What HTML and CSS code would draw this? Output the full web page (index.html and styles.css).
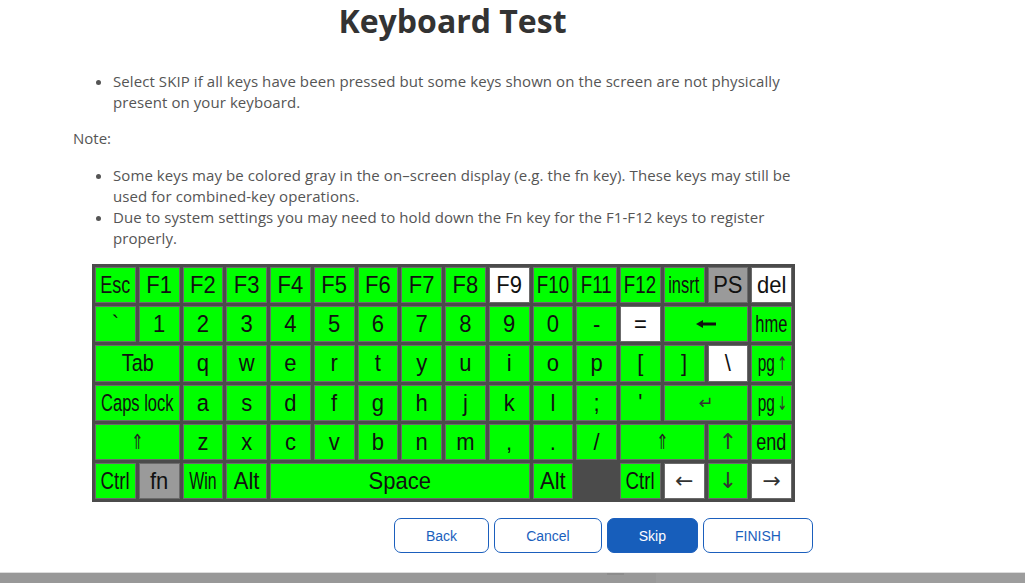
FILE: index.html
```html
<!DOCTYPE html>
<html>
<head>
<meta charset="utf-8">
<title>Keyboard Test</title>
<link rel="stylesheet" href="styles.css">
</head>
<body>
<div class="page">
  <header class="top">
    <h1 class="title">Keyboard Test</h1>
  </header>
  <div class="view">
    <div class="content">
      <ul class="list list-first">
        <li>Select SKIP if all keys have been pressed but some keys shown on the screen are not physically present on your keyboard.</li>
      </ul>
      <p class="note">Note:</p>
      <ul class="list list-second">
        <li>Some keys may be colored gray in the on–screen display (e.g. the fn key). These keys may still be used for combined-key operations.</li>
        <li>Due to system settings you may need to hold down the Fn key for the F1-F12 keys to register properly.</li>
      </ul>

      <div class="kb">
        <!-- row 1 -->
        <div class="key"><span class="lbl s82">Esc</span></div>
        <div class="key"><span class="lbl">F1</span></div>
        <div class="key"><span class="lbl">F2</span></div>
        <div class="key"><span class="lbl">F3</span></div>
        <div class="key"><span class="lbl">F4</span></div>
        <div class="key"><span class="lbl">F5</span></div>
        <div class="key"><span class="lbl">F6</span></div>
        <div class="key"><span class="lbl">F7</span></div>
        <div class="key"><span class="lbl">F8</span></div>
        <div class="key white"><span class="lbl">F9</span></div>
        <div class="key"><span class="lbl s85">F10</span></div>
        <div class="key"><span class="lbl s85">F11</span></div>
        <div class="key"><span class="lbl s85">F12</span></div>
        <div class="key"><span class="lbl s75">insrt</span></div>
        <div class="key gray"><span class="lbl">PS</span></div>
        <div class="key white"><span class="lbl">del</span></div>
        <!-- row 2 -->
        <div class="key"><span class="lbl">`</span></div>
        <div class="key"><span class="lbl">1</span></div>
        <div class="key"><span class="lbl">2</span></div>
        <div class="key"><span class="lbl">3</span></div>
        <div class="key"><span class="lbl">4</span></div>
        <div class="key"><span class="lbl">5</span></div>
        <div class="key"><span class="lbl">6</span></div>
        <div class="key"><span class="lbl">7</span></div>
        <div class="key"><span class="lbl">8</span></div>
        <div class="key"><span class="lbl">9</span></div>
        <div class="key"><span class="lbl">0</span></div>
        <div class="key"><span class="lbl">-</span></div>
        <div class="key white"><span class="lbl">=</span></div>
        <div class="key span2">
          <svg class="bksp" width="22" height="10" viewBox="0 0 22 10"><path d="M7 3.5H21V6.5H7z" fill="#111"/><path d="M1 5L8 1V9Z" fill="#111"/></svg>
        </div>
        <div class="key"><span class="lbl s75">hme</span></div>
        <!-- row 3 -->
        <div class="key span2"><span class="lbl s90">Tab</span></div>
        <div class="key"><span class="lbl">q</span></div>
        <div class="key"><span class="lbl">w</span></div>
        <div class="key"><span class="lbl">e</span></div>
        <div class="key"><span class="lbl">r</span></div>
        <div class="key"><span class="lbl">t</span></div>
        <div class="key"><span class="lbl">y</span></div>
        <div class="key"><span class="lbl">u</span></div>
        <div class="key"><span class="lbl">i</span></div>
        <div class="key"><span class="lbl">o</span></div>
        <div class="key"><span class="lbl">p</span></div>
        <div class="key"><span class="lbl">[</span></div>
        <div class="key"><span class="lbl">]</span></div>
        <div class="key white"><span class="lbl">\</span></div>
        <div class="key pg"><span class="lbl s70">pg</span><span class="arr">↑</span></div>
        <!-- row 4 -->
        <div class="key span2"><span class="lbl s75">Caps lock</span></div>
        <div class="key"><span class="lbl">a</span></div>
        <div class="key"><span class="lbl">s</span></div>
        <div class="key"><span class="lbl">d</span></div>
        <div class="key"><span class="lbl">f</span></div>
        <div class="key"><span class="lbl">g</span></div>
        <div class="key"><span class="lbl">h</span></div>
        <div class="key"><span class="lbl">j</span></div>
        <div class="key"><span class="lbl">k</span></div>
        <div class="key"><span class="lbl">l</span></div>
        <div class="key"><span class="lbl">;</span></div>
        <div class="key"><span class="lbl">'</span></div>
        <div class="key span2"><span class="enter">↵</span></div>
        <div class="key pg"><span class="lbl s70">pg</span><span class="arr">↓</span></div>
        <!-- row 5 -->
        <div class="key span2"><span class="shift">⇑</span></div>
        <div class="key"><span class="lbl">z</span></div>
        <div class="key"><span class="lbl">x</span></div>
        <div class="key"><span class="lbl">c</span></div>
        <div class="key"><span class="lbl">v</span></div>
        <div class="key"><span class="lbl">b</span></div>
        <div class="key"><span class="lbl">n</span></div>
        <div class="key"><span class="lbl">m</span></div>
        <div class="key"><span class="lbl">,</span></div>
        <div class="key"><span class="lbl">.</span></div>
        <div class="key"><span class="lbl">/</span></div>
        <div class="key span2"><span class="shift">⇑</span></div>
        <div class="key"><span class="arrow">↑</span></div>
        <div class="key"><span class="lbl s82">end</span></div>
        <!-- row 6 -->
        <div class="key"><span class="lbl s85">Ctrl</span></div>
        <div class="key gray"><span class="lbl">fn</span></div>
        <div class="key"><span class="lbl s72">Win</span></div>
        <div class="key"><span class="lbl">Alt</span></div>
        <div class="key span6"><span class="lbl">Space</span></div>
        <div class="key"><span class="lbl">Alt</span></div>
        <div class="blank"></div>
        <div class="key"><span class="lbl s85">Ctrl</span></div>
        <div class="key white"><span class="arrow">←</span></div>
        <div class="key"><span class="arrow">↓</span></div>
        <div class="key white"><span class="arrow">→</span></div>
      </div>

      <div class="actions">
        <button class="btn">Back</button>
        <button class="btn">Cancel</button>
        <button class="btn primary">Skip</button>
        <button class="btn">FINISH</button>
      </div>
    </div>
  </div>
  <div class="bottombar">
    <div class="bar-left"><span class="bar-tab"></span></div>
    <div class="bar-right"></div>
  </div>
</div>
</body>
</html>
```

FILE: styles.css
```css
* { box-sizing: border-box; }

html, body {
  margin: 0;
  padding: 0;
  background: #ffffff;
}

.page {
  width: 1025px;
  height: 583px;
  display: flex;
  flex-direction: column;
  overflow: hidden;
  font-family: "Open Sans", "Noto Sans", sans-serif;
}

.top {
  height: 75px;
  width: 905px;
  text-align: center;
  flex: none;
}

.title {
  margin: 0;
  font-size: 32px;
  line-height: 42px;
  font-weight: 700;
  color: #333333;
}

.view {
  flex: 1;
  overflow: hidden;
}

.content {
  margin-top: -4.5px;
  margin-left: 73px;
  width: 730px;
}

.list {
  margin: 0;
  padding-left: 40px;
  font-size: 15px;
  line-height: 21px;
  letter-spacing: 0.08px;
  color: #555555;
}

.note {
  margin: 15px 0 16px 0;
  font-size: 15px;
  line-height: 21px;
  color: #555555;
}

.kb {
  margin-top: 15.5px;
  margin-left: 19px;
  width: 703px;
  height: 238px;
  padding: 3px;
  background: #4b4b4b;
  display: grid;
  grid-template-columns: repeat(16, 1fr);
  grid-template-rows: repeat(6, 1fr);
  gap: 3px;
}

.key {
  background: #00ff00;
  border: 1px solid #6b6b6b;
  display: flex;
  align-items: center;
  justify-content: center;
  font-family: "Liberation Sans", Arial, sans-serif;
  font-size: 22px;
  color: #111111;
  overflow: hidden;
  white-space: nowrap;
}

.key.white { background: #ffffff; }
.key.gray { background: #9a9a9a; }
.span2 { grid-column: span 2; }
.span6 { grid-column: span 6; }
.blank { background: transparent; }

.lbl {
  display: inline-block;
  transform: scale(1, 1.08);
}
.s90 { transform: scale(0.9, 1.08); }
.s85 { transform: scale(0.85, 1.08); }
.s82 { transform: scale(0.82, 1.08); }
.s75 { transform: scale(0.75, 1.08); }
.s72 { transform: scale(0.72, 1.08); }
.s70 { transform: scale(0.7, 1.08); }

.pg .lbl { margin-right: -3px; }

.arr {
  display: inline-block;
  font-family: "DejaVu Sans", sans-serif;
  font-size: 17px;
  color: #333;
  transform: scale(0.7, 1.1);
}

.arrow {
  display: inline-block;
  font-family: "DejaVu Sans", sans-serif;
  font-size: 22px;
  color: #333;
}

.shift {
  display: inline-block;
  font-family: "DejaVu Sans", sans-serif;
  font-size: 20px;
  color: #222;
  transform: scale(0.75, 1.05);
}

.enter {
  display: inline-block;
  font-family: "DejaVu Sans", sans-serif;
  font-size: 18px;
  color: #333;
}

.actions {
  margin-top: 16px;
  margin-left: 321px;
  display: flex;
  gap: 5px;
}

.btn {
  height: 35px;
  padding: 0 31px;
  border: 1px solid #1b5fbd;
  border-radius: 7px;
  background: #ffffff;
  color: #1b5fbd;
  font-family: "Liberation Sans", Arial, sans-serif;
  font-size: 14px;
}

.btn.primary {
  background: #175ebb;
  color: #ffffff;
}

.bottombar {
  flex: none;
  height: 11px;
  border-top: 1px solid #dcdcdc;
  display: flex;
}

.bar-left {
  width: 656px;
  background: #989898;
  display: flex;
}

.bar-tab {
  margin-left: 607px;
  width: 17px;
  height: 2px;
  background: #8c8c8c;
}

.bar-right {
  flex: 1;
  background: #9d9d9d;
}
```
